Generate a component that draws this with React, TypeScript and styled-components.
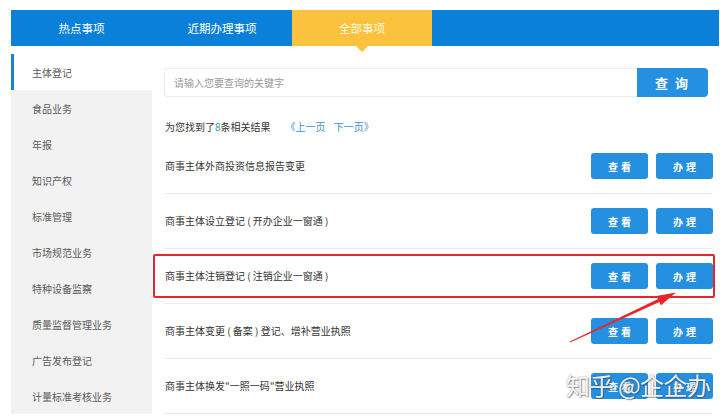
import React from 'react';
import styled, { createGlobalStyle } from 'styled-components';

const GlobalStyle = createGlobalStyle`
  html, body {
    margin: 0;
    padding: 0;
    background: #ffffff;
  }
  body {
    font-family: "Noto Sans CJK SC", "Noto Sans", sans-serif;
    color: #333;
  }
`;

const BLUE = '#0b80d9';
const BTN = '#2590e0';
const YELLOW = '#fbc33d';

const Page = styled.div`
  position: relative;
  width: 720px;
  height: 417px;
  box-sizing: border-box;
  padding: 10px 1px 0 11px;
  overflow: hidden;
`;

const TabBar = styled.div`
  display: flex;
  height: 36px;
  background: ${BLUE};
`;

const Tab = styled.div<{ $active?: boolean; $w: number }>`
  position: relative;
  width: ${(p) => p.$w}px;
  display: flex;
  align-items: center;
  justify-content: center;
  font-size: 11.5px;
  color: ${(p) => (p.$active ? '#fff7e0' : '#ffffff')};
  background: ${(p) => (p.$active ? YELLOW : 'transparent')};

  &::after {
    content: '';
    display: ${(p) => (p.$active ? 'block' : 'none')};
    position: absolute;
    left: 50%;
    bottom: -6px;
    margin-left: -6px;
    border-left: 6px solid transparent;
    border-right: 6px solid transparent;
    border-top: 6px solid ${YELLOW};
  }
`;

const Body = styled.div`
  display: flex;
  margin-top: 8px;
`;

const Sidebar = styled.div`
  width: 141px;
  flex-shrink: 0;
  background: #f2f2f2;
  display: flex;
  flex-direction: column;
`;

const SideItem = styled.div<{ $active?: boolean }>`
  height: 36px;
  box-sizing: border-box;
  display: flex;
  align-items: center;
  padding-left: 18px;
  border-left: 3px solid ${(p) => (p.$active ? '#1a7fd6' : 'transparent')};
  background: ${(p) => (p.$active ? '#ffffff' : 'transparent')};
  font-size: 10px;
  color: #5a5a5a;
`;

const Main = styled.div`
  width: 548px;
  margin-left: 12px;
  padding-top: 14px;
`;

const SearchRow = styled.div`
  display: flex;
  height: 29px;
  margin-right: 4px;
`;

const SearchInput = styled.div`
  flex: 1;
  box-sizing: border-box;
  border: 1px solid #ececec;
  border-right: none;
  border-radius: 4px 0 0 4px;
  display: flex;
  align-items: center;
  padding-left: 9px;
  font-size: 10px;
  color: #999;
`;

const SearchButton = styled.div`
  width: 71px;
  background: ${BTN};
  border-radius: 0 4px 4px 0;
  display: flex;
  align-items: center;
  justify-content: center;
  color: #fff;
  font-size: 13px;
  font-weight: 700;
  letter-spacing: 2px;
  white-space: pre;
`;

const ResultLine = styled.div`
  margin-top: 19px;
  height: 20px;
  display: flex;
  align-items: center;
  font-size: 10px;
  color: #333;
  padding-left: 1px;
`;

const Count = styled.span`
  color: #35a0a8;
`;

const Pager = styled.span`
  margin-left: 15px;
  color: #3c8fd0;
  word-spacing: 6px;
`;

const List = styled.div`
  margin-top: 3px;
`;

const Row = styled.div`
  position: relative;
  height: 54px;
  border-bottom: 1px solid #ebebeb;
  display: flex;
  align-items: center;
  justify-content: space-between;
`;

const RowTitle = styled.div`
  font-size: 10px;
  color: #333;
  padding-left: 1px;
  padding-bottom: 2px;
  white-space: pre;
`;

const Actions = styled.div`
  display: flex;
  gap: 8px;
  margin-right: -1px;
`;

const ActionButton = styled.div`
  width: 57px;
  height: 26px;
  border-radius: 3px;
  background: ${BTN};
  color: #fff;
  font-size: 10px;
  font-weight: 700;
  letter-spacing: 3px;
  padding-left: 3px;
  box-sizing: border-box;
  display: flex;
  align-items: center;
  justify-content: center;
`;

const Highlight = styled.div`
  position: absolute;
  left: -11px;
  right: -3px;
  top: 5px;
  bottom: 5px;
  border: 2px solid #e3262b;
  border-radius: 2px;
  pointer-events: none;
`;

const ArrowLayer = styled.svg`
  position: absolute;
  left: 0;
  top: 0;
  pointer-events: none;
`;

const Watermark = styled.div`
  position: absolute;
  left: 566px;
  top: 369px;
  font-size: 24px;
  line-height: 32px;
  letter-spacing: -0.5px;
  color: rgba(255, 255, 255, 0.92);
  text-shadow: 0 0 2px rgba(60, 60, 60, 0.55), 1px 1px 1px rgba(60, 60, 60, 0.45);
  pointer-events: none;
  white-space: nowrap;
`;

const tabs = [
  { label: '热点事项', w: 141 },
  { label: '近期办理事项', w: 140 },
  { label: '全部事项', w: 140, active: true },
];

const sideItems = [
  '主体登记',
  '食品业务',
  '年报',
  '知识产权',
  '标准管理',
  '市场规范业务',
  '特种设备监察',
  '质量监督管理业务',
  '广告发布登记',
  '计量标准考核业务',
];

const rows = [
  '商事主体外商投资信息报告变更',
  '商事主体设立登记 ( 开办企业一窗通 )',
  '商事主体注销登记 ( 注销企业一窗通 )',
  '商事主体变更 ( 备案 ) 登记、增补营业执照',
  '商事主体换发"一照一码"营业执照',
];

export default function App() {
  return (
    <>
      <GlobalStyle />
      <Page>
        <TabBar>
          {tabs.map((t) => (
            <Tab key={t.label} $w={t.w} $active={t.active}>
              {t.label}
            </Tab>
          ))}
        </TabBar>
        <Body>
          <Sidebar>
            {sideItems.map((s, i) => (
              <SideItem key={s} $active={i === 0}>
                {s}
              </SideItem>
            ))}
          </Sidebar>
          <Main>
            <SearchRow>
              <SearchInput>请输入您要查询的关键字</SearchInput>
              <SearchButton>查 询</SearchButton>
            </SearchRow>
            <ResultLine>
              为您找到了<Count>8</Count>条相关结果
              <Pager>《上一页 下一页》</Pager>
            </ResultLine>
            <List>
              {rows.map((r, i) => (
                <Row key={r}>
                  <RowTitle>{r}</RowTitle>
                  <Actions>
                    <ActionButton>查看</ActionButton>
                    <ActionButton>办理</ActionButton>
                  </Actions>
                  {i === 2 && <Highlight />}
                </Row>
              ))}
            </List>
          </Main>
        </Body>
        <ArrowLayer width="720" height="417" viewBox="0 0 720 417">
          <polygon
            points="570.1,342.4 659.4,302.1 661,305.3 676,292.6 656.4,295.9 658,299.1 569.9,341.6"
            fill="#e8262a"
          />
        </ArrowLayer>
        <Watermark>知乎 @企企办</Watermark>
      </Page>
    </>
  );
}
